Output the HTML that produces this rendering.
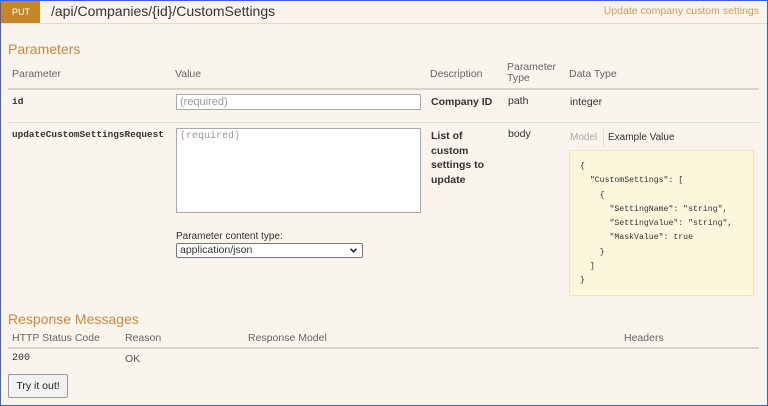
<!DOCTYPE html><html><head><style>
*{margin:0;padding:0;box-sizing:border-box}
body{width:768px;height:406px;overflow:hidden;background:#f9f4ee;font-family:"Liberation Sans",sans-serif;color:#333;position:relative}
.frame{position:absolute;left:0;top:0;width:768px;height:406px;border:1px solid #3a5fd8;pointer-events:none}
.a{position:absolute;white-space:nowrap}
.hdr{position:absolute;left:0;top:0;width:768px;height:24px;background:#fbf4ec;border-bottom:1px solid #eadccb}
.put{position:absolute;left:1px;top:1px;width:39px;height:22px;background:#c5862b;color:#fff;font-size:9px;line-height:22px;padding-left:11px}
.h{color:#c88a40;font-size:14px}
.th{color:#666;font-size:10.5px}
.line{position:absolute;height:2px;background:#d8d2cc}
.inp{position:absolute;background:#fff;border:1px solid #aaa;font-size:11px;color:#999;padding:2px 3px}
.mono{font-family:"Liberation Mono",monospace}
.code{position:absolute;left:569px;top:150px;width:185px;height:146px;background:#fcf6dc;border:1px solid #eee5c5;font-family:"Liberation Mono",monospace;font-size:8.2px;line-height:14.3px;padding:9px 0 0 10px;white-space:pre;color:#333}
</style></head><body>
<div class="hdr"></div>
<div class="put">PUT</div>
<div class="a" style="left:51px;top:3px;font-size:14px;color:#333">/api/Companies/{id}/CustomSettings</div>
<div class="a" style="right:9px;top:5px;font-size:10.5px;color:#d09a5a">Update company custom settings</div>

<div class="a h" style="left:8px;top:41px">Parameters</div>
<div class="a th" style="left:12px;top:68px">Parameter</div>
<div class="a th" style="left:175px;top:68px">Value</div>
<div class="a th" style="left:430px;top:68px">Description</div>
<div class="a th" style="left:507px;top:62px;line-height:11px">Parameter<br>Type</div>
<div class="a th" style="left:569px;top:68px">Data Type</div>
<div class="line" style="left:8px;top:88px;width:751px"></div>

<div class="a mono" style="left:12px;top:96px;font-size:9.5px;font-weight:bold">id</div>
<div class="inp" style="left:176px;top:94px;width:245px;height:16px;line-height:10px">(required)</div>
<div class="a" style="left:431px;top:96px;font-size:10.5px;font-weight:bold">Company ID</div>
<div class="a" style="left:508px;top:95px;font-size:10.5px">path</div>
<div class="a" style="left:570px;top:96px;font-size:10.5px">integer</div>
<div class="line" style="left:8px;top:122px;width:751px;height:1px;background:#e4ded8"></div>

<div class="a mono" style="left:12px;top:129px;font-size:9.4px;font-weight:bold">updateCustomSettingsRequest</div>
<div class="inp mono" style="left:176px;top:128px;width:245px;height:85px;font-size:10px">(required)</div>
<div class="a" style="left:431px;top:129px;font-size:10.5px;font-weight:bold;line-height:14.5px">List of<br>custom<br>settings to<br>update</div>
<div class="a" style="left:508px;top:128px;font-size:10.5px">body</div>
<div class="a" style="left:570px;top:132px;font-size:10px;color:#aaa">Model</div>
<div class="a" style="left:603px;top:129px;width:1px;height:18px;background:#ddd"></div>
<div class="a" style="left:608px;top:132px;font-size:10px;color:#333">Example Value</div>
<div class="code">{
  "CustomSettings": [
    {
      "SettingName": "string",
      "SettingValue": "string",
      "MaskValue": true
    }
  ]
}</div>

<div class="a" style="left:176px;top:231px;font-size:10px">Parameter content type:</div>
<div class="a" style="left:176px;top:243px;width:187px;height:15px;background:#fff;border:1px solid #777;border-radius:2px;font-size:10.5px;line-height:13px;padding-left:3px">application/json<svg style="position:absolute;right:5px;top:4px" width="7" height="5" viewBox="0 0 7 5"><path d="M0.5 0.8L3.5 3.8L6.5 0.8" fill="none" stroke="#222" stroke-width="1.6"/></svg></div>

<div class="a h" style="left:8px;top:311px">Response Messages</div>
<div class="a th" style="left:12px;top:332px">HTTP Status Code</div>
<div class="a th" style="left:125px;top:332px">Reason</div>
<div class="a th" style="left:248px;top:332px">Response Model</div>
<div class="a th" style="left:624px;top:332px">Headers</div>
<div class="line" style="left:8px;top:347px;width:751px"></div>
<div class="a mono" style="left:12px;top:353px;font-size:10px">200</div>
<div class="a" style="left:125px;top:353px;font-size:10.5px;color:#555">OK</div>
<div class="a" style="left:8px;top:374px;width:60px;height:24px;background:#f2f2f2;border:1px solid #999;border-radius:2px;font-size:10.5px;line-height:22px;text-align:center;color:#222">Try it out!</div>
<div class="frame"></div>
</body></html>
